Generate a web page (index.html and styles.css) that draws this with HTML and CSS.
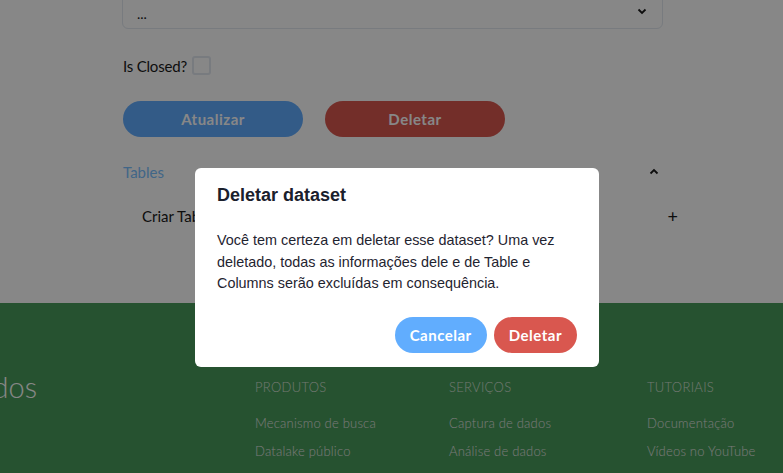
FILE: index.html
```
<html>
  <head>
    <meta charset="utf-8">
    <title>Dataset</title>
    <link rel="stylesheet" href="styles.css">
  </head>
  <body>
    <div class="page">
      <div class="form">
        <div class="select">
          <span>...</span>
          <svg class="chev" width="12" height="12" viewBox="0 0 12 12"><path d="M2.5 4.5 L6 8 L9.5 4.5" fill="none" stroke="#1a1a1a" stroke-width="1.8"/></svg>
        </div>
        <label class="check-row">Is Closed? <span class="checkbox"></span></label>
        <div class="actions">
          <button class="btn btn-blue">Atualizar</button>
          <button class="btn btn-red">Deletar</button>
        </div>
        <div class="acc-head">
          <span>Tables</span>
          <svg width="12" height="12" viewBox="0 0 12 12"><path d="M2.5 7.5 L6 4 L9.5 7.5" fill="none" stroke="#1a1a1a" stroke-width="1.8"/></svg>
        </div>
        <div class="acc-item">
          <span>Criar Table</span>
          <span class="plus">+</span>
        </div>
      </div>
    </div>

    <footer class="footer">
      <div class="brand"><span>Base dos Dados</span></div>
      <div class="fcol">
        <div class="fhead">PRODUTOS</div>
        <a>Mecanismo de busca</a>
        <a>Datalake público</a>
      </div>
      <div class="fcol fcol-wide">
        <div class="fhead">SERVIÇOS</div>
        <a>Captura de dados</a>
        <a>Análise de dados</a>
      </div>
      <div class="fcol">
        <div class="fhead">TUTORIAIS</div>
        <a>Documentação</a>
        <a>Vídeos no YouTube</a>
      </div>
    </footer>

    <div class="overlay">
      <div class="modal">
        <h2 class="modal-title">Deletar dataset</h2>
        <p class="modal-body">Você tem certeza em deletar esse dataset? Uma vez deletado, todas as informações dele e de Table e Columns serão excluídas em consequência.</p>
        <div class="modal-foot">
          <button class="btn btn-sm btn-light">Cancelar</button>
          <button class="btn btn-sm btn-red">Deletar</button>
        </div>
      </div>
    </div>
  </body>
</html>
```

FILE: styles.css
```
body {
  margin: 0;
  overflow: hidden;
  height: 473px;
  font-family: Lato, "Open Sans", sans-serif;
  color: #1a1a1a;
  background: #fff;
}

.page {
  height: 303px;
  overflow: hidden;
}

.form {
  margin: -12px 0 0 123px;
  width: 540px;
}

.select {
  height: 41px;
  border: 1px solid #e2e8f0;
  border-radius: 6px;
  display: flex;
  align-items: center;
  justify-content: space-between;
  padding: 10px 14px 0 14px;
  box-sizing: border-box;
  margin-left: -1px;
  font-size: 14px;
}

.chev {
  margin-top: -5px;
}

.check-row {
  display: flex;
  align-items: center;
  gap: 5px;
  margin-top: 27px;
  font-size: 15px;
  letter-spacing: -0.2px;
}

.checkbox {
  width: 15px;
  height: 15px;
  border: 2px solid #e2e8f0;
  border-radius: 3px;
}

.actions {
  display: flex;
  gap: 22px;
  margin-top: 26px;
}

.btn {
  border: none;
  border-radius: 18px;
  height: 36px;
  width: 180px;
  color: #fff;
  font-family: Lato, "Open Sans", sans-serif;
  font-weight: 700;
  font-size: 15px;
  letter-spacing: 0.5px;
}

.btn-blue {
  background: #60acff;
}

.btn-red {
  background: #d9574f;
}

.btn-light {
  background: #61adfe;
}

.acc-head {
  display: flex;
  justify-content: space-between;
  align-items: center;
  margin-top: 26px;
  font-size: 15px;
  color: #7bc1ff;
  padding-right: 3px;
}

.acc-item {
  display: flex;
  justify-content: space-between;
  align-items: center;
  margin-top: 24px;
  padding-left: 19px;
  font-size: 15px;
  margin-right: -15px;
}

.plus {
  font-size: 18px;
}

.footer {
  height: 170px;
  background: #489c5b;
  display: flex;
  color: #fff;
  padding-top: 76px;
  box-sizing: border-box;
}

.brand {
  width: 37px;
  display: flex;
  justify-content: flex-end;
  white-space: nowrap;
  font-size: 29px;
  font-weight: 300;
  margin-top: -7px;
  margin-right: 218px;
  line-height: 30px;
}

.fcol {
  display: flex;
  flex-direction: column;
  width: 194px;
  font-size: 13px;
  font-weight: 300;
  gap: 12px;
}

.fcol-wide {
  width: 198px;
}

.fhead {
  letter-spacing: 0.3px;
  margin-bottom: 8px;
  color: #d8e0d8;
}

.fcol a {
  color: #e4e4e4;
  height: 16px;
  letter-spacing: 0.2px;
}

.fcol:last-child {
  width: auto;
}

.overlay {
  position: fixed;
  inset: 0;
  background: rgba(0, 0, 0, 0.47);
  padding: 168px 0 0 195px;
}

.modal {
  width: 404px;
  height: 199px;
  background: #fff;
  border-radius: 6px;
  box-sizing: border-box;
  padding: 15px 22px 15px 22px;
  font-family: "Liberation Sans", Arial, sans-serif;
}

.modal-title {
  margin: 0;
  font-size: 18px;
  font-weight: 700;
  color: #1a202c;
  line-height: 24px;
}

.modal-body {
  margin: 23px 0 0;
  font-size: 14.4px;
  line-height: 21.5px;
  color: #1f2430;
}

.modal-foot {
  display: flex;
  justify-content: flex-end;
  gap: 7px;
  margin-top: 22px;
}

.btn-sm {
  width: auto;
  padding: 0 15px;
}
```
